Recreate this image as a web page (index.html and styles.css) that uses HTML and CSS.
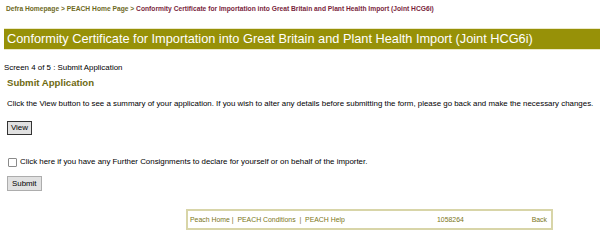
FILE: index.html
```html
<!DOCTYPE html>
<html lang="en">
<head>
    <meta charset="UTF-8">
    <title>PEACH - Submit Application</title>
    <link rel="stylesheet" href="styles.css">
</head>
<body>
    <div class="breadcrumb">
        <a href="#">Defra Homepage</a> &gt; <a href="#">PEACH Home Page</a> &gt;
        <span class="current">Conformity Certificate for Importation into Great Britain and Plant Health Import (Joint HCG6i)</span>
    </div>

    <div class="title-bar">Conformity Certificate for Importation into Great Britain and Plant Health Import (Joint HCG6i)</div>

    <div class="content">
        <p class="screen-no">Screen 4 of 5 : Submit Application</p>
        <h2>Submit Application</h2>
        <p class="intro">Click the View button to see a summary of your application. If you wish to alter any details before submitting the form, please go back and make the necessary changes.</p>

        <button class="btn btn-view" type="button">View</button>

        <label class="further">
            <input type="checkbox">
            Click here if you have any Further Consignments to declare for yourself or on behalf of the importer.
        </label>

        <button class="btn btn-submit" type="button">Submit</button>
    </div>

    <div class="footer">
        <div class="footer-links">
            <a href="#">Peach Home</a> |&nbsp; <a href="#">PEACH Conditions</a> &nbsp;|&nbsp; <a href="#">PEACH Help</a>
        </div>
        <div class="ref">1058264</div>
        <a class="back" href="#">Back</a>
    </div>
</body>
</html>
```

FILE: styles.css
```css
body {
    font-family: "Liberation Sans", Arial, sans-serif;
    background-color: #fff;
    color: #000;
    margin: 0;
    padding: 0;
}

a {
    text-decoration: none;
}

.breadcrumb {
    font-size: 6.7px;
    line-height: 10px;
    font-weight: bold;
    color: #6e6a1e;
    padding: 4px 0 0 6px;
    height: 10px;
    white-space: nowrap;
}

.breadcrumb a {
    color: #6e6a1e;
}

.breadcrumb .current {
    color: #7a1f3d;
}

.title-bar {
    margin: 14px 0 0 4px;
    background-color: #979108;
    color: #fff;
    font-size: 12.75px;
    line-height: 20px;
    padding-left: 3px;
    border-top: 1px solid #ece9c8;
    border-bottom: 1px solid #ece9c8;
    white-space: nowrap;
}

.content {
    padding-left: 4px;
}

.screen-no {
    font-size: 7.9px;
    line-height: 10px;
    margin: 13px 0 0 0;
}

h2 {
    font-size: 9.6px;
    line-height: 12px;
    color: #6e6a12;
    margin: 4px 0 0 3px;
}

.intro {
    font-size: 7.9px;
    line-height: 10px;
    margin: 10px 0 0 3px;
    white-space: nowrap;
}

.btn {
    display: block;
    font-family: "Liberation Sans", Arial, sans-serif;
    font-size: 7.9px;
    line-height: 10px;
    color: #000;
    background-color: #e1e1e1;
    border: 1px solid #adadad;
    padding: 0 3px;
    margin-left: 3px;
}

.btn-view {
    height: 14px;
    margin-top: 12px;
    border: 1px solid #333;
}

.btn-submit {
    height: 15px;
    margin-top: 9px;
    padding: 0 4px;
}

.further {
    display: flex;
    align-items: center;
    font-size: 7.9px;
    line-height: 10px;
    margin: 22px 0 0 4px;
}

.further input {
    appearance: none;
    width: 9px;
    height: 9px;
    margin: 0 3px 0 0;
    border: 1px solid #8a8a8a;
    border-radius: 1px;
    background-color: #fff;
}

.footer {
    display: flex;
    align-items: center;
    margin: 18px 0 0 186px;
    width: 361px;
    height: 17px;
    border: 2px solid #d8d5a8;
    font-size: 6.9px;
    color: #7b7520;
    padding: 0 0 0 2px;
}

.footer a {
    color: #7b7520;
}

.footer-links {
    width: 247px;
}

.ref {
    flex: 1;
}

.back {
    margin-right: 4px;
}
```
